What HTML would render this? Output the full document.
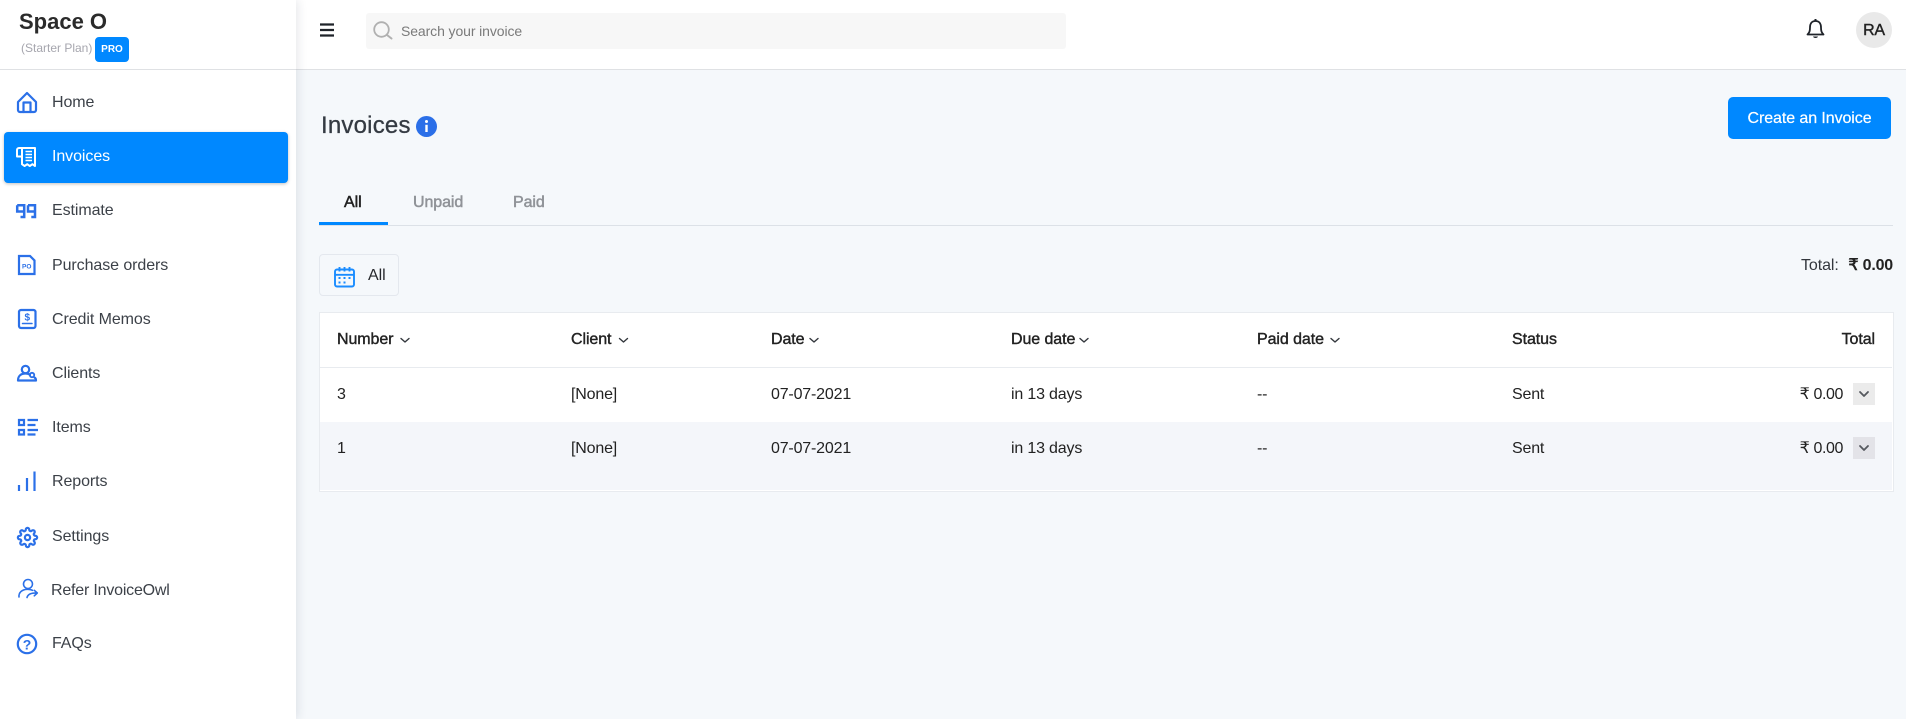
<!DOCTYPE html>
<html lang="en">
<head>
<meta charset="utf-8">
<title>Invoices</title>
<style>
html,body{margin:0;padding:0;width:1906px;height:719px;overflow:hidden;background:#f5f8fb;font-family:"Liberation Sans",sans-serif;color:#222}
.a{position:absolute}
.t{position:absolute;white-space:nowrap;line-height:20px;font-size:16px;margin-top:1px;letter-spacing:-.08px}
.z{margin-top:0}
.m{-webkit-text-stroke:.4px currentColor}
#head{left:0;top:0;width:1906px;height:69px;background:#fff;border-bottom:1px solid #dfe1e4}
#side{left:0;top:0;width:296px;height:719px;background:#fff;box-shadow:2px 0 9px rgba(40,50,70,.11)}
#sideline{left:0;top:69px;width:296px;height:1px;background:#dfe1e4}
#active{left:4px;top:132px;width:284px;height:51px;background:#0088ff;border-radius:4px;box-shadow:0 1px 3px rgba(0,0,0,.25)}
.n{color:#3c4148;left:52px}
#search{left:366px;top:13px;width:700px;height:36px;background:#f7f7f7;border-radius:3px}
#btn{left:1728px;top:97px;width:163px;height:42px;background:#0088ff;border-radius:5px}
#avatar{left:1856px;top:12px;width:36px;height:36px;border-radius:50%;background:#e9e9e9;text-align:center;line-height:38px;font-size:16px;color:#222;-webkit-text-stroke:.4px #222;letter-spacing:-.3px}
#tabline{left:319px;top:225px;width:1574px;height:1px;background:#dce1e7}
#tabact{left:319px;top:222px;width:69px;height:3px;background:#0088ff}
#filter{left:319px;top:254px;width:78px;height:40px;border:1px solid #e4e8ee;border-radius:4px}
#table{left:319px;top:312px;width:1573px;height:178px;background:#fff;border:1px solid #e8ebef}
#hline{left:320px;top:367px;width:1572px;height:1px;background:#e8ebef}
#row2{left:320px;top:422px;width:1572px;height:68px;background:#f4f6fa}
.chev{width:22px;height:22px;left:1853px}
.d{letter-spacing:-.18px}
</style>
</head>
<body>
<div class="a" id="head"></div>
<div class="a" id="side"></div>
<div class="a" id="sideline"></div>
<div class="a" id="active"></div>

<div class="t z" style="left:19px;top:11px;font-size:22px;line-height:22px;font-weight:700;color:#2b2b2b;letter-spacing:0">Space O</div>
<div class="t z" style="left:21px;top:38px;font-size:12px;color:#a6a6ae;letter-spacing:0">(Starter Plan)</div>
<div class="a" style="left:95px;top:37px;width:34px;height:25px;background:#0088ff;border-radius:4px;color:#fff;font-size:10px;font-weight:700;text-align:center;line-height:26px">PRO</div>

<div class="t n" style="top:92px">Home</div>
<div class="t n" style="top:146px;color:#fff">Invoices</div>
<div class="t n" style="top:200px">Estimate</div>
<div class="t n" style="top:255px">Purchase orders</div>
<div class="t n" style="top:309px">Credit Memos</div>
<div class="t n" style="top:363px">Clients</div>
<div class="t n" style="top:417px">Items</div>
<div class="t n" style="top:471px">Reports</div>
<div class="t n" style="top:526px">Settings</div>
<div class="t n" style="top:580px;left:51px;letter-spacing:-.2px">Refer InvoiceOwl</div>
<div class="t n" style="top:633px">FAQs</div>

<div class="a" id="search"></div>
<div class="t z" style="left:401px;top:21px;font-size:14px;color:#7a7a7a;letter-spacing:-.1px">Search your invoice</div>
<div class="a" id="avatar">RA</div>

<div class="t m" style="left:321px;top:110px;font-size:24px;line-height:30px;color:#343a42;-webkit-text-stroke:.3px #343a42;letter-spacing:.2px">Invoices</div>
<div class="a" id="btn"></div>
<div class="t m" style="left:1728px;width:163px;text-align:center;top:108px;color:#fff;-webkit-text-stroke:.2px #fff">Create an Invoice</div>

<div class="t m" style="left:344px;top:192px;color:#222;-webkit-text-stroke:.5px #222">All</div>
<div class="t m" style="left:413px;top:192px;color:#909398;-webkit-text-stroke:.5px #909398">Unpaid</div>
<div class="t m" style="left:513px;top:192px;color:#909398;-webkit-text-stroke:.5px #909398">Paid</div>
<div class="a" id="tabline"></div>
<div class="a" id="tabact"></div>

<div class="a" id="filter"></div>
<div class="t z" style="left:368px;top:266px;color:#26282c">All</div>
<div class="t" style="left:1801px;top:255px;color:#33373d">Total:</div>
<div class="t z" style="right:13px;top:256px;font-weight:700;color:#222;letter-spacing:-.2px">₹ 0.00</div>

<div class="a" id="table"></div>
<div class="a" id="hline"></div>
<div class="a" id="row2"></div>

<div class="t m" style="left:337px;top:329px">Number</div>
<div class="t m" style="left:571px;top:329px">Client</div>
<div class="t m" style="left:771px;top:329px">Date</div>
<div class="t m" style="left:1011px;top:329px">Due date</div>
<div class="t m" style="left:1257px;top:329px">Paid date</div>
<div class="t m" style="left:1512px;top:329px">Status</div>
<div class="t m" style="right:31px;top:329px">Total</div>

<div class="t d" style="left:337px;top:384px">3</div>
<div class="t d" style="left:571px;top:384px">[None]</div>
<div class="t d" style="left:771px;top:384px">07-07-2021</div>
<div class="t d" style="left:1011px;top:384px">in 13 days</div>
<div class="t d" style="left:1257px;top:384px">--</div>
<div class="t d" style="left:1512px;top:384px">Sent</div>
<div class="t d" style="right:63px;top:384px;letter-spacing:-.4px">₹ 0.00</div>
<div class="a chev" style="top:383px;background:#ebebeb"></div>

<div class="t d" style="left:337px;top:438px">1</div>
<div class="t d" style="left:571px;top:438px">[None]</div>
<div class="t d" style="left:771px;top:438px">07-07-2021</div>
<div class="t d" style="left:1011px;top:438px">in 13 days</div>
<div class="t d" style="left:1257px;top:438px">--</div>
<div class="t d" style="left:1512px;top:438px">Sent</div>
<div class="t d" style="right:63px;top:438px;letter-spacing:-.4px">₹ 0.00</div>
<div class="a chev" style="top:437px;background:#e3e3e8"></div>

<svg class="a" style="left:0;top:0" width="1906" height="719" viewBox="0 0 1906 719" fill="none">
<g stroke="#2b70e8" stroke-width="2.200" stroke-linejoin="round" stroke-linecap="round">
<!-- home -->
<path d="M18 102 L27 93 L36 102 V110 a2 2 0 0 1 -2 2 H20 a2 2 0 0 1 -2 -2 Z"/>
<path d="M23.500 112 V102.500 H30.500 V112"/>
<!-- estimate -->
<path d="M17.200 205.200 H24.200 V217 H20.500 M17.200 205.200 V211.500 H24.200" stroke-width="2.500" stroke-linecap="butt" stroke-linejoin="miter"/>
<path d="M28 205.200 H35 V217 H31.300 M28 205.200 V211.500 H35" stroke-width="2.500" stroke-linecap="butt" stroke-linejoin="miter"/>
<!-- PO -->
<path d="M19 256 H30 L34.500 260.500 V274 H19 Z" stroke-linejoin="miter"/>
<!-- credit -->
<rect x="19" y="310" width="16.500" height="18" rx="2"/>
<path d="M22.500 323.500 H32" stroke-width="1.500"/>
<!-- clients -->
<circle cx="25.500" cy="369.500" r="3.700"/>
<circle cx="32" cy="375" r="2.200" stroke-width="1.800"/>
<path d="M18 380.500 C18 376 21 373.500 25.500 373.500 C27.500 373.500 29 374 30 375 M18 380.500 H36 C36 379 35.500 378 34.500 377.500"/>
<!-- items -->
<path d="M19 420 H24 V425 H19 Z M19 430 H24 V434.500 H19 Z" stroke-linejoin="miter"/>
<path d="M27.500 420 H38 M27.500 425 H35.500 M27.500 430 H38 M27.500 434.500 H35.500" stroke-linecap="butt"/>
<!-- reports -->
<path d="M19 491 V485 M27 491 V478 M34.500 491 V471.500" stroke-linecap="butt"/>
<!-- settings -->
<g transform="translate(17 527) scale(.875)" stroke-width="2.500">
<circle cx="12" cy="12" r="3"/>
<path d="M19.400 15a1.650 1.650 0 0 0 .33 1.820l.06.06a2 2 0 0 1 0 2.830 2 2 0 0 1-2.830 0l-.06-.06a1.650 1.650 0 0 0-1.820-.33 1.650 1.650 0 0 0-1 1.510V21a2 2 0 0 1-2 2 2 2 0 0 1-2-2v-.09A1.650 1.650 0 0 0 9 19.400a1.650 1.650 0 0 0-1.820.33l-.06.06a2 2 0 0 1-2.830 0 2 2 0 0 1 0-2.830l.06-.06a1.650 1.650 0 0 0 .33-1.820 1.650 1.650 0 0 0-1.510-1H3a2 2 0 0 1-2-2 2 2 0 0 1 2-2h.09A1.650 1.650 0 0 0 4.600 9a1.650 1.650 0 0 0-.33-1.820l-.06-.06a2 2 0 0 1 0-2.830 2 2 0 0 1 2.830 0l.06.06a1.650 1.650 0 0 0 1.820.33H9a1.650 1.650 0 0 0 1-1.510V3a2 2 0 0 1 2-2 2 2 0 0 1 2 2v.09a1.650 1.650 0 0 0 1 1.510 1.650 1.650 0 0 0 1.820-.33l.06-.06a2 2 0 0 1 2.830 0 2 2 0 0 1 0 2.830l-.06.06a1.650 1.650 0 0 0-.33 1.820V9a1.650 1.650 0 0 0 1.510 1H21a2 2 0 0 1 2 2 2 2 0 0 1-2 2h-.09a1.650 1.650 0 0 0-1.510 1z"/>
</g>
<!-- refer -->
<g stroke-width="1.600">
<circle cx="28" cy="584" r="4.500"/>
<path d="M19 597 C18.500 592.500 22 589.500 27 589.300 C29 589.200 31 589.500 32.500 590.300"/>
<path d="M27 597.500 C28 594 31.500 592.800 37 593 M34.300 590.300 L37.300 593 L34.300 595.800"/>
</g>
<!-- faq -->
<circle cx="27" cy="644" r="9.200"/>
</g>

<!-- invoices icon (white) -->
<g stroke="#fff" stroke-width="2" stroke-linecap="butt" stroke-linejoin="round">
<path d="M22 148 H35 V166 l-2.600 -1.800 -2.600 1.800 -2.600 -1.800 -2.600 1.800 -2.600 -1.800 V148"/>
<path d="M22 148 H19 a2 2 0 0 0 -2 2 V156.500 H22"/>
<path d="M25.500 151.500 H32 M25.500 154.500 H32 M25.500 157.500 H32 M25.500 160.500 H32" stroke-width="1.500"/>
</g>

<text x="22" y="268.500" font-family="Liberation Sans,sans-serif" font-size="6.500" font-weight="700" fill="#2b70e8">PO</text>
<text x="27.300" y="320.500" text-anchor="middle" font-family="Liberation Sans,sans-serif" font-size="10" font-weight="700" fill="#2b70e8">$</text>
<text x="27" y="649.300" text-anchor="middle" font-family="Liberation Sans,sans-serif" font-size="14" font-weight="700" fill="#2b70e8">?</text>

<!-- hamburger -->
<path d="M320 24.500 H334 M320 30 H334 M320 35.500 H334" stroke="#1f2329" stroke-width="2.300"/>
<!-- search -->
<circle cx="381.500" cy="29.500" r="7.300" stroke="#b0b0b0" stroke-width="1.800"/>
<path d="M387 35 L391.500 38.500" stroke="#b0b0b0" stroke-width="2" stroke-linecap="round"/>
<!-- bell -->
<path d="M1807.500 34.500 C1809.500 32.500 1810 31 1810 27.500 C1810 23.500 1812 21 1815.500 21 C1819 21 1821 23.500 1821 27.500 C1821 31 1821.500 32.500 1823.500 34.500 Z" stroke="#1f2329" stroke-width="1.800" stroke-linejoin="round"/>
<path d="M1815.500 19 V21" stroke="#1f2329" stroke-width="2"/>
<path d="M1813 36.500 a2.600 2 0 0 0 5 0 Z" fill="#1f2329"/>
<!-- info -->
<circle cx="426.500" cy="126.500" r="10.500" fill="#2b6fe8"/>
<circle cx="426.500" cy="121.500" r="1.500" fill="#fff"/>
<rect x="425.300" y="124.800" width="2.400" height="7.200" fill="#fff"/>
<!-- calendar -->
<g stroke="#1a8cff" stroke-width="1.900">
<rect x="335" y="269.500" width="19" height="17" rx="2"/>
<path d="M335 274.800 H354 M339.500 267 V271.500 M344.500 267 V271.500 M349.500 267 V271.500"/>
</g>
<g fill="#1a8cff">
<rect x="338.500" y="277" width="2" height="2"/><rect x="343.500" y="277" width="2" height="2"/><rect x="348.500" y="277" width="2" height="2"/>
<rect x="338.500" y="281.500" width="2" height="2"/><rect x="343.500" y="281.500" width="2" height="2"/>
</g>
<!-- header chevrons -->
<g stroke="#33373d" stroke-width="1.400" stroke-linecap="round" stroke-linejoin="round">
<path d="M401 338.500 L405 342 L409 338.500"/>
<path d="M619.500 338.500 L623.500 342 L627.500 338.500"/>
<path d="M810 338.500 L814 342 L818 338.500"/>
<path d="M1080 338.500 L1084 342 L1088 338.500"/>
<path d="M1331 338.500 L1335 342 L1339 338.500"/>
</g>
<!-- row chevrons -->
<g stroke="#55585e" stroke-width="1.800" stroke-linecap="round" stroke-linejoin="round">
<path d="M1860 392 L1864 396 L1868 392"/>
<path d="M1860 446 L1864 450 L1868 446"/>
</g>
</svg>
</body>
</html>
